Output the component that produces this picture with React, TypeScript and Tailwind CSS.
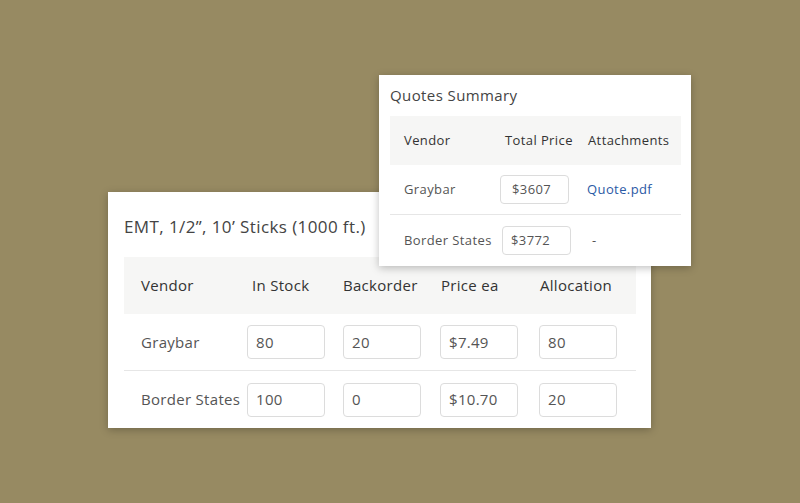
const font = { fontFamily: '"Open Sans", "Liberation Sans", sans-serif' };

function Field({ value, className }: { value: string; className: string }) {
  return (
    <div className={`flex items-center rounded border border-[#dcdcdc] bg-white text-[#555] ${className}`}>
      {value}
    </div>
  );
}

function StockCard() {
  const rows = [
    { vendor: "Graybar", stock: "80", back: "20", price: "$7.49", alloc: "80" },
    { vendor: "Border States", stock: "100", back: "0", price: "$10.70", alloc: "20" },
  ];
  const cols = "grid grid-cols-[123px_96px_97px_99px_97px]";
  return (
    <div className="absolute left-[108px] top-[192px] w-[543px] bg-white pl-4 pr-[15px] shadow-[0_2px_8px_rgba(0,0,0,0.25)]">
      <div className="flex h-[65px] items-center pt-1 text-[17px] tracking-[0.4px] text-[#444]">
        EMT, 1/2”, 10’ Sticks (1000 ft.)
      </div>
      <div className={`${cols} h-[57px] items-center bg-[#f6f6f5] text-[15px] tracking-[0.3px] text-[#333]`}>
        <div className="pl-[17px]">Vendor</div>
        <div className="pl-[5px]">In Stock</div>
        <div>Backorder</div>
        <div className="pl-px">Price ea</div>
        <div className="pl-px">Allocation</div>
      </div>
      {rows.map((r, i) => (
        <div
          key={r.vendor}
          className={`${cols} h-[57px] items-center text-[15px] tracking-[0.3px] text-[#555] ${i === 0 ? "border-b border-[#e6e6e6]" : ""}`}
        >
          <div className="pl-[17px]">{r.vendor}</div>
          <Field value={r.stock} className="h-[34px] w-[78px] pl-2" />
          <Field value={r.back} className="h-[34px] w-[78px] pl-2" />
          <Field value={r.price} className="h-[34px] w-[78px] pl-2" />
          <Field value={r.alloc} className="h-[34px] w-[78px] pl-2" />
        </div>
      ))}
    </div>
  );
}

function QuotesCard() {
  const cols = "grid grid-cols-[110px_88px_93px]";
  return (
    <div className="absolute left-[379px] top-[75px] w-[312px] bg-white pl-[11px] pr-[10px] shadow-[0_2px_8px_rgba(0,0,0,0.25)]">
      <div className="flex h-[41px] items-center text-[15px] tracking-[0.4px] text-[#444]">Quotes Summary</div>
      <div className={`${cols} h-[49px] items-center bg-[#f6f6f5] text-[13px] tracking-[0.4px] text-[#333]`}>
        <div className="pl-[14px]">Vendor</div>
        <div className="pl-[5px]">Total Price</div>
        <div>Attachments</div>
      </div>
      <div className={`${cols} h-[50px] items-center border-b border-[#e6e6e6] text-[13px] tracking-[0.4px] text-[#555]`}>
        <div className="pl-[14px]">Graybar</div>
        <Field value="$3607" className="h-[29px] w-[69px] pl-[11px]" />
        <div className="-ml-px text-[#2b5aa5]">Quote.pdf</div>
      </div>
      <div className={`${cols} h-[51px] items-center text-[13px] tracking-[0.4px] text-[#555]`}>
        <div className="pl-[14px]">Border States</div>
        <Field value="$3772" className="ml-[2px] h-[29px] w-[69px] pl-[8px]" />
        <div className="pl-[4px]">-</div>
      </div>
    </div>
  );
}

export default function App() {
  return (
    <div className="relative h-[503px] w-[800px] overflow-hidden bg-[#978a62]" style={font}>
      <StockCard />
      <QuotesCard />
    </div>
  );
}
